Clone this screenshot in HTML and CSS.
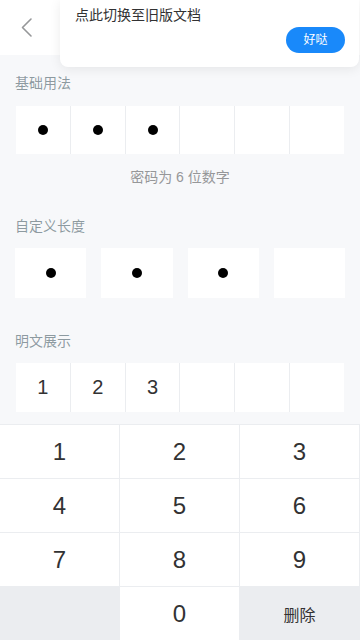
FILE: index.html
```html
<!DOCTYPE html>
<html lang="zh-CN">
<head>
<meta charset="utf-8">
<meta name="viewport" content="width=device-width, initial-scale=1">
<title>PasswordInput</title>
<link rel="stylesheet" href="styles.css">
</head>
<body>
<header class="nav">
  <svg class="back" width="16" height="24" viewBox="0 0 16 24" aria-hidden="true">
    <polyline points="11,2 2.5,10.5 11,19" fill="none" stroke="#969799" stroke-width="1.6" stroke-linecap="round" stroke-linejoin="round"/>
  </svg>
</header>

<div class="popup">
  <div class="popup-text">点此切换至旧版文档</div>
  <div class="popup-actions"><span class="btn">好哒</span></div>
</div>

<main class="content">
  <h2 class="title first">基础用法</h2>
  <ul class="pwd">
    <li><i></i></li><li><i></i></li><li><i></i></li><li></li><li></li><li></li>
  </ul>
  <div class="info">密码为 6 位数字</div>

  <h2 class="title second">自定义长度</h2>
  <ul class="pwd gutter">
    <li><i></i></li><li><i></i></li><li><i></i></li><li></li>
  </ul>

  <h2 class="title">明文展示</h2>
  <ul class="pwd plain">
    <li>1</li><li>2</li><li>3</li><li></li><li></li><li></li>
  </ul>
</main>

<div class="keyboard">
  <div class="key">1</div><div class="key">2</div><div class="key">3</div>
  <div class="key">4</div><div class="key">5</div><div class="key">6</div>
  <div class="key">7</div><div class="key">8</div><div class="key">9</div>
  <div class="key gray"></div><div class="key">0</div><div class="key gray del">删除</div>
</div>
</body>
</html>
```
FILE: styles.css
```css
* { box-sizing: border-box; }
html, body { margin: 0; padding: 0; }
body {
  background: #f7f8fa;
  font-family: "Liberation Sans", "Noto Sans CJK SC", sans-serif;
  color: #323233;
  width: 360px;
  height: 640px;
  overflow: hidden;
  position: relative;
}

.nav {
  height: 55px;
  background: #fff;
  display: flex;
  align-items: center;
  padding-left: 20px;
}
.back { display: block; margin-top: 2px; }

.popup {
  position: absolute;
  top: 0;
  left: 60px;
  right: 1px;
  background: #fff;
  border-radius: 0 0 8px 8px;
  box-shadow: 0 2px 12px rgba(0, 0, 0, 0.08);
  padding: 5px 14px 14px 15px;
}
.popup-text {
  font-size: 14px;
  line-height: 20px;
  color: #323233;
}
.popup-actions {
  display: flex;
  justify-content: flex-end;
  margin-top: 2px;
}
.btn {
  width: 59px;
  height: 26px;
  border-radius: 13px;
  background: #1989fa;
  color: #fff;
  font-size: 12px;
  line-height: 26px;
  text-align: center;
}

.title {
  margin: 0;
  padding: 35px 15px 14px;
  font-size: 14px;
  line-height: 16px;
  font-weight: normal;
  color: rgba(69, 90, 100, 0.6);
}
.title.first { padding-top: 20px; padding-bottom: 15px; }
.title.second { padding-top: 33px; }

.pwd {
  list-style: none;
  margin: 0 16px;
  padding: 0;
  height: 48px;
  display: flex;
  background: #fff;
}
.pwd li {
  flex: 1;
  display: flex;
  align-items: center;
  justify-content: center;
  border-left: 1px solid #ebedf0;
  font-size: 20px;
  color: #323233;
}
.pwd li:first-child { border-left: 0; }
.pwd i {
  width: 10px;
  height: 10px;
  border-radius: 50%;
  background: #000;
}

.pwd.gutter {
  margin: 0 15px;
  height: 50px;
  background: transparent;
  gap: 15px;
}
.pwd.gutter li {
  background: #fff;
  border-left: 0;
}

.pwd.plain { height: 49px; }

.info {
  margin-top: 15px;
  text-align: center;
  font-size: 14px;
  line-height: 16px;
  color: #969799;
}

.keyboard {
  position: fixed;
  left: 0;
  bottom: 0;
  width: 360px;
  display: grid;
  grid-template-columns: repeat(3, 120px);
  grid-auto-rows: 54px;
  background: #fff;
}
.key {
  border-top: 1px solid #ebedf0;
  border-right: 1px solid #ebedf0;
  display: flex;
  align-items: center;
  justify-content: center;
  font-size: 24px;
  color: #323233;
  background: #fff;
}
.key.gray { background: #ebedf0; }
.key.del { font-size: 16px; }
```
